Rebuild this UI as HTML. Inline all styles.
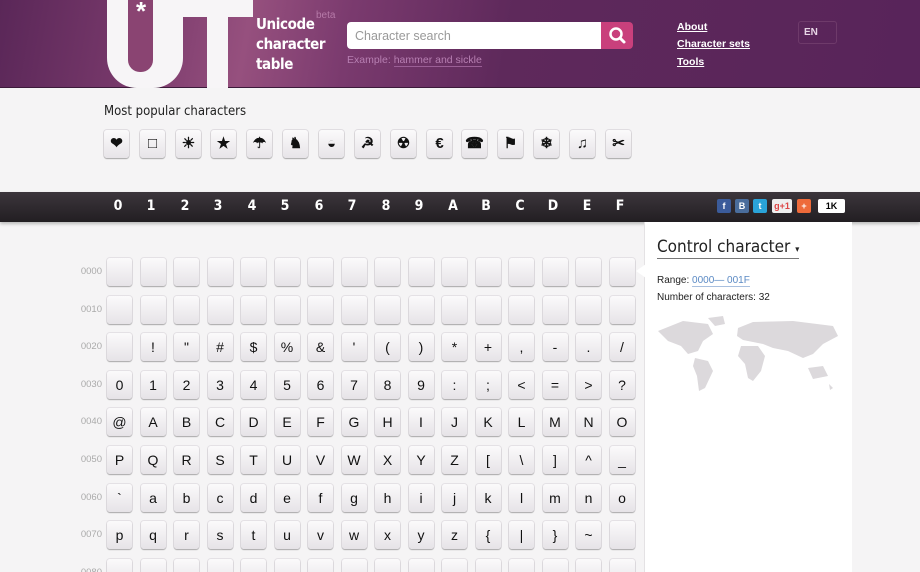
<!DOCTYPE html>
<html><head><meta charset="utf-8"><style>
*{margin:0;padding:0;box-sizing:border-box}
html,body{width:920px;height:572px;overflow:hidden}
body{background:#f5f4f5;font-family:"Liberation Sans",sans-serif;position:relative}
.hdr{position:absolute;left:0;top:0;width:920px;height:88px;background:linear-gradient(100deg,#5a2758 0%,#7a3a6c 16%,#96507e 27%,#7a3a6e 38%,#5e295b 55%,#58245a 100%);border-bottom:1px solid #3c1a3a}
.w{position:absolute;background:#f7f5f7}
.title{position:absolute;left:256px;top:14px;color:#fff;font-family:"DejaVu Sans Condensed",sans-serif;font-weight:bold;font-size:15px;letter-spacing:-0.4px;line-height:20px}
.beta{position:absolute;left:316px;top:10px;color:#b67aa8;font-size:10px}
.search{position:absolute;left:347px;top:22px;width:255px;height:27px;background:#fff;border-radius:4px 0 0 4px;color:#999;font-size:12.5px;padding:7px 8px}
.sbtn{position:absolute;left:601px;top:22px;width:32px;height:27px;background:#c9407c;border-radius:0 4px 4px 0}
.ex{position:absolute;left:347px;top:54px;color:#b77fb2;font-size:10.5px}
.ex span{border-bottom:1px solid #9b5f96}
.nav{position:absolute;left:677px;color:#fff;font-size:10.5px;font-weight:bold;text-decoration:underline}
.en{position:absolute;left:798px;top:21px;width:39px;height:23px;border:1px solid #6e3a6a;border-radius:3px;color:#e8d6e6;font-size:10px;font-weight:bold;padding:5px 5px}
.pop{position:absolute;left:104px;top:104px;font-family:"DejaVu Sans Condensed",sans-serif;font-size:13px;color:#222}
.pb{position:absolute;top:130px;width:25px;height:28px;background:linear-gradient(#fbfafb,#e7e4e8);border-radius:3px;box-shadow:0 1px 1px #aaa,0 0 0 1px #e0dde1;text-align:center;font-size:15px;line-height:28px;color:#111;font-weight:bold}
.bar{position:absolute;left:0;top:192px;width:920px;height:30px;background:linear-gradient(#3c363c,#221e22);box-shadow:0 2px 3px #bbb}
.hx{position:absolute;top:198px;color:#fff;font-family:"DejaVu Sans Condensed",sans-serif;font-weight:bold;font-size:14px;width:20px;text-align:center}
.soc{position:absolute;top:199px;width:14px;height:14px;border-radius:2px;color:#fff;font-size:9px;font-weight:bold;text-align:center;line-height:14px}
.panel{position:absolute;left:644px;top:222px;width:208px;height:350px;background:#fff;border-left:1px solid #e4e2e4}
.c{position:absolute;width:25px;height:28px;background:linear-gradient(#fbfafb,#e6e3e7);border-radius:3px;box-shadow:0 1px 1px #aaa,0 0 0 1px #e4e1e5;text-align:center;font-family:"Liberation Sans",sans-serif;font-size:14px;line-height:28px;color:#111}
.lb{position:absolute;left:60px;width:42px;text-align:right;font-size:9.5px;color:#aaa}
</style></head><body>
<div class="hdr"></div>
<div class="w" style="left:107px;top:0;width:76px;height:88px;border-radius:0 0 30px 30px"></div>
<div style="position:absolute;left:128px;top:0;width:25px;height:72px;background:#8a4472;border-radius:0 0 12px 12px"></div>
<div style="position:absolute;left:136px;top:-4px;color:#fff;font-size:26px;font-weight:bold">*</div>
<div class="w" style="left:182px;top:0;width:71px;height:17px"></div>
<div class="w" style="left:207px;top:0;width:21px;height:88px"></div>
<div class="title">Unicode<br>character<br>table</div>
<div class="beta">beta</div>
<div class="search">Character search</div>
<div class="sbtn"><svg width="32" height="27"><circle cx="15" cy="12" r="5.5" fill="none" stroke="#fff" stroke-width="2.5"/><path d="M19 16l4 4" stroke="#fff" stroke-width="3" stroke-linecap="round"/></svg></div>
<div class="ex">Example: <span>hammer and sickle</span></div>
<div class="nav" style="top:21px">About</div>
<div class="nav" style="top:38px">Character sets</div>
<div class="nav" style="top:56px">Tools</div>
<div class="en">EN</div>
<div class="pop">Most popular characters</div>
<div class="pb" style="left:104px">❤</div><div class="pb" style="left:140px">□</div><div class="pb" style="left:176px">☀</div><div class="pb" style="left:211px">★</div><div class="pb" style="left:247px">☂</div><div class="pb" style="left:283px">♞</div><div class="pb" style="left:319px">◒</div><div class="pb" style="left:355px">☭</div><div class="pb" style="left:391px">☢</div><div class="pb" style="left:427px">€</div><div class="pb" style="left:462px">☎</div><div class="pb" style="left:498px">⚑</div><div class="pb" style="left:534px">❄</div><div class="pb" style="left:570px">♫</div><div class="pb" style="left:606px">✂</div>
<div class="bar"></div>
<div class="hx" style="left:108px">0</div><div class="hx" style="left:141px">1</div><div class="hx" style="left:175px">2</div><div class="hx" style="left:208px">3</div><div class="hx" style="left:242px">4</div><div class="hx" style="left:275px">5</div><div class="hx" style="left:309px">6</div><div class="hx" style="left:342px">7</div><div class="hx" style="left:376px">8</div><div class="hx" style="left:409px">9</div><div class="hx" style="left:443px">A</div><div class="hx" style="left:476px">B</div><div class="hx" style="left:510px">C</div><div class="hx" style="left:543px">D</div><div class="hx" style="left:577px">E</div><div class="hx" style="left:610px">F</div>
<div class="soc" style="left:717px;background:#3b5b9a">f</div><div class="soc" style="left:735px;background:#4a6d9c">B</div><div class="soc" style="left:753px;background:#2aa3d8">t</div><div class="soc" style="left:772px;width:20px;background:#eee;color:#d44">g+1</div><div class="soc" style="left:797px;background:#ee6a3a">+</div>
<div class="soc" style="left:818px;width:27px;background:#fff;color:#000;font-size:9px">1K</div>
<div class="panel">
<div style="position:absolute;left:12px;top:15px;font-family:'DejaVu Sans Condensed',sans-serif;font-size:17px;color:#222;border-bottom:1px solid #777;padding-bottom:1px">Control character <span style="font-size:9px">▾</span></div>
<div style="position:absolute;left:12px;top:53px;font-size:10px;color:#222">Range: <span style="color:#5b8ac4;border-bottom:1px solid #a9c0df">0000— 001F</span></div>
<div style="position:absolute;left:12px;top:70px;font-size:10px;color:#222">Number of characters: 32</div>
<svg style="position:absolute;left:8px;top:94px" width="190" height="80" fill="#dcd9dc"><path d="M5 15 L30 5 L55 8 L60 18 L50 25 L45 35 L35 38 L28 30 L15 25Z"/><path d="M55 2 L70 0 L72 8 L62 10Z"/><path d="M42 42 L55 45 L60 55 L52 72 L46 75 L44 60 L40 50Z"/><path d="M85 12 L100 6 L140 5 L180 10 L185 20 L170 28 L160 38 L150 42 L135 35 L120 32 L110 28 L100 26 L90 24 L84 20Z"/><path d="M88 30 L105 30 L112 40 L108 55 L100 65 L95 62 L92 48 L85 40Z"/><path d="M155 52 L170 50 L175 60 L160 63Z"/><path d="M176 68 L180 72 L177 74Z"/></svg>
</div>
<div style="position:absolute;left:636px;top:264px;width:10px;height:14px;background:#fff;clip-path:polygon(100% 0,0 50%,100% 100%)"></div>
<div id="g"></div>
<script>
var E=["","","","","","","","","","","","","","","",""];
var rows=[E,E,["","!","\"","#","$","%","&","'","(",")","*","+",",","-",".","/"],
"0123456789:;<=>?".split(""),"@ABCDEFGHIJKLMNO".split(""),"PQRSTUVWXYZ[\\]^_".split(""),"`abcdefghijklmno".split(""),"pqrstuvwxyz{|}~ ".split(""),E];
var h="";
for(var r=0;r<rows.length;r++){var y=258+r*37.6;h+='<div class="lb" style="top:'+(y+8)+'px">00'+r.toString(16).toUpperCase()+'0</div>';
for(var c=0;c<16;c++){var t=rows[r][c]||"";t=t.replace("&","&amp;").replace("<","&lt;").replace(">","&gt;");h+='<div class="c" style="left:'+(107+c*33.5)+'px;top:'+y+'px">'+t+'</div>';}}
document.getElementById("g").innerHTML=h;
</script>
</body></html>
